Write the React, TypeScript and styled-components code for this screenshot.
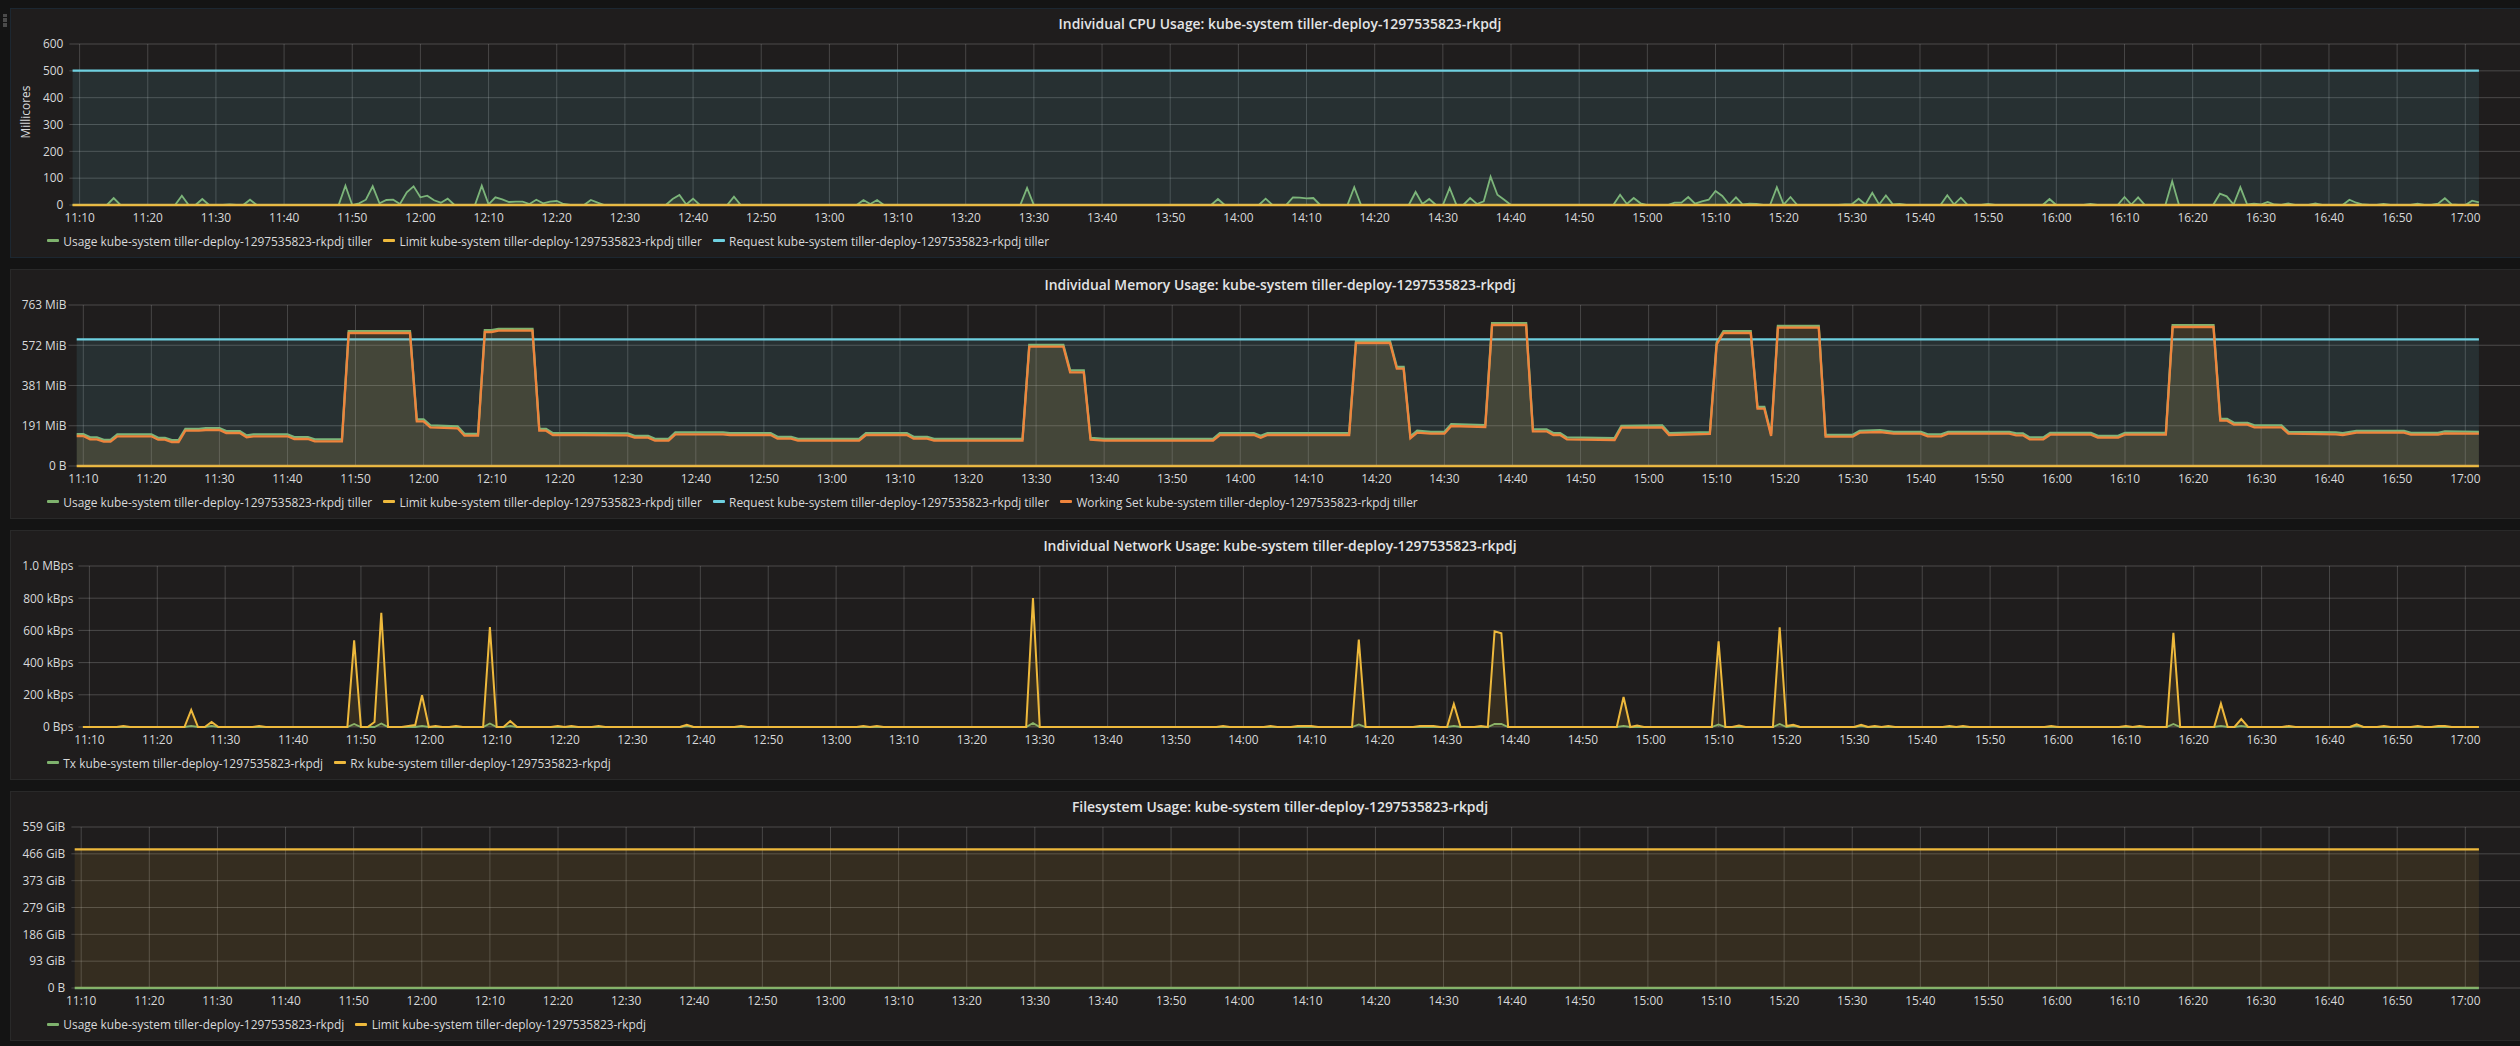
import React from 'react'
import styled, { createGlobalStyle } from 'styled-components'

const GREEN = '#7eb26d'
const YELLOW = '#eeb93c'
const CYAN = '#6ed0e0'
const ORANGE = '#ef843c'
const POD = 'kube-system tiller-deploy-1297535823-rkpdj'

const GlobalStyle = createGlobalStyle`
	html,
	body {
		margin: 0;
		height: 100%;
		overflow: hidden;
		background: #141414;
	}
`

const Dashboard = styled.div`
	display: flex;
	width: 2520px;
	height: 1046px;
	overflow: hidden;
	padding-top: 7.5px;
	box-sizing: border-box;
	font-family: 'Open Sans', sans-serif;
	color: #d8d9da;
`

const Rail = styled.div`
	flex: 0 0 10px;
	display: flex;
	flex-direction: column;
	align-items: center;
	gap: 1.6px;
	padding-top: 6px;
`

const RailDot = styled.span`
	width: 3.4px;
	height: 3.4px;
	background: #4a4a4a;
`

const Rows = styled.div`
	flex: 0 0 2540px;
	display: flex;
	flex-direction: column;
	gap: 11.2px;
`

const Panel = styled.section<{ $edge: string }>`
	display: flex;
	flex-direction: column;
	height: 250px;
	box-sizing: border-box;
	background: #1f1d1d;
	border: 1px solid ${(props) => props.$edge};
`

const Title = styled.h2`
	margin: 0;
	padding-top: 4px;
	height: 25px;
	box-sizing: border-box;
	line-height: 21px;
	text-align: center;
	font-size: 13.9px;
	font-weight: 600;
	color: #e3e4e5;
`

const Plot = styled.svg`
	display: block;
	flex: none;
`

const AxisText = styled.text`
	font-family: 'Open Sans', sans-serif;
	font-size: 11.9px;
	fill: #d8d9da;
`

const Legend = styled.ul`
	display: flex;
	align-items: center;
	gap: 11px;
	height: 22px;
	margin: 0;
	padding: 0 0 0 36px;
	list-style: none;
	font-size: 11.9px;
`

const LegendItem = styled.li`
	display: flex;
	align-items: center;
	gap: 4.3px;
	white-space: nowrap;
`

const Swatch = styled.span<{ $color: string }>`
	width: 12px;
	height: 3px;
	border-radius: 1px;
	background: ${(props) => props.$color};
`

type Point = [number, number]

interface Series {
	name: string
	color: string
	points: Point[]
	width?: number
}

interface ChartConfig {
	title: string
	edge: string
	yLabels: string[]
	yAxisEnd: number
	gridLeft: number
	seriesLeft: number
	tickZero: number
	yTitle?: string
	series: Series[]
}

const GRID_TOP = 10
const GRID_BOTTOM = 171
const LAST_TICK = 2454.3
const LAST_MINUTE = 352

// sparse samples -> one point per minute, anything not listed sits on zero
const perMinute = (samples: Record<number, number>): Point[] => {
	const out: Point[] = []
	for (let m = -1; m <= LAST_MINUTE; m++) out.push([m, samples[m] ?? 0])
	return out
}

const flat = (h: number): Point[] => [
	[-1, h],
	[LAST_MINUTE, h],
]

const cpuUsage = perMinute({
	5: 7, 15: 9.3, 18: 6, 22: 0.7, 25: 5.3, 39: 19.3, 41: 1.7, 42: 5.3, 43: 18.7, 44: 1.7, 45: 5, 46: 5.3, 47: 1,
	48: 12.7, 49: 18.7, 50: 7.7, 51: 9.3, 52: 4.7, 53: 2.3, 54: 6.3, 59: 19.3, 60: 0.7, 61: 7.7, 62: 5.7, 63: 3,
	64: 3.3, 65: 3.3, 66: 1, 67: 5.3, 68: 1.7, 69: 3.3, 70: 4, 71: 1, 75: 5, 76: 2.3, 87: 6, 88: 10, 89: 0.5, 90: 6.3,
	96: 8.3, 115: 5, 116: 1, 117: 5, 139: 17, 167: 6, 174: 6.3, 178: 7.7, 179: 7.3, 180: 6.7, 181: 7, 187: 17.7,
	196: 13, 197: 1, 198: 6, 201: 17, 204: 7, 205: 1, 206: 3.7, 207: 28.3, 208: 10.3, 209: 5.3, 226: 10.3, 227: 1,
	228: 7, 229: 1.7, 234: 2.3, 235: 2.3, 236: 8, 237: 1.3, 238: 3.7, 239: 5.3, 240: 14, 241: 9, 242: 0.5, 243: 7.7,
	244: 0.5, 245: 1.3, 246: 1, 249: 17.7, 250: 0.5, 251: 8, 259: 0.7, 260: 0.7, 261: 6.3, 262: 0.5, 263: 12.3,
	264: 0.5, 265: 9.5, 266: 0.6, 267: 1, 274: 9.7, 275: 0.5, 276: 7.3, 280: 1, 289: 6, 295: 1, 300: 8, 301: 0.5,
	302: 7.7, 307: 23.7, 314: 11.3, 315: 8.7, 316: 0.5, 317: 17.7, 318: 0.5, 319: 1.3, 320: 0.5, 321: 3, 322: 0.5,
	324: 1.5, 328: 1.5, 333: 5.3, 334: 2.3, 335: 0.5, 338: 1, 343: 1.3, 346: 1.3, 347: 6.7, 348: 0.5, 351: 4.3, 352: 2.7,
})

const workingSet: Point[] = [
	[-1, 30], [0, 30], [1, 26.7], [2, 26.7], [3, 24.3], [4, 24.3], [5, 29.7], [10, 29.7], [11, 26.3], [12, 26.3],
	[13, 24], [14, 24], [15, 35.3], [17, 35.3], [18, 36], [20, 36], [21, 33], [23, 33], [24, 28.7], [25, 29.7],
	[30, 29.7], [31, 27], [33, 27], [34, 24.7], [38, 24.7], [39, 133], [48, 133], [49, 44.7], [50, 44.7], [51, 38.7],
	[55, 37.7], [56, 30.3], [58, 30.3], [59, 134], [60, 134], [61, 135.3], [66, 135.3], [67, 35.3], [68, 35.3], [69, 31],
	[73, 31], [80, 30.7], [81, 28.3], [83, 28.3], [84, 25.3], [86, 25.3], [87, 31.7], [94, 31.7], [95, 31], [101, 31],
	[102, 27.3], [104, 27.3], [105, 25.3], [114, 25.3], [115, 31], [121, 31], [122, 27.3], [124, 27.3], [125, 25.3],
	[138, 25.3], [139, 119.3], [144, 119.3], [145, 93.7], [147, 93.7], [148, 26.3], [150, 25.3], [166, 25.3], [167, 31],
	[172, 31], [173, 28.3], [174, 31], [186, 31], [187, 123], [192, 123], [193, 97.3], [194, 97.3], [195, 27.7],
	[196, 33.3], [198, 32.3], [200, 32.3], [201, 40], [206, 39], [207, 141], [212, 141], [213, 34.7], [215, 34.7],
	[216, 31], [217, 31], [218, 26.7], [225, 26], [226, 38.3], [232, 38.6], [233, 31], [239, 32], [240, 121.7],
	[241, 133], [245, 133], [246, 57.3], [247, 57.3], [248, 30], [249, 138.3], [255, 138.3], [256, 29.3], [260, 29.3],
	[261, 33.3], [264, 34], [266, 32.3], [270, 32.3], [271, 29.7], [273, 29.7], [274, 32.3], [283, 32.3], [284, 30.7],
	[285, 30.7], [286, 26.7], [288, 26.7], [289, 31.3], [295, 31.3], [296, 28.3], [299, 28.3], [300, 31.3], [306, 31.3],
	[307, 139], [313, 139], [314, 45.3], [315, 45.3], [316, 41.3], [318, 41.3], [319, 38.7], [323, 38.7], [324, 32.3],
	[331, 31.7], [332, 31], [334, 33.3], [341, 33.3], [342, 31.3], [346, 31.3], [347, 32.7], [352, 32.3],
]

const memUsage: Point[] = workingSet.map(([m, h]) => [m, h + 1.9])

const netTx = perMinute({
	15: 1, 18: 1, 39: 3, 43: 3.5, 49: 1, 59: 3.5, 62: 1, 88: 1, 139: 4, 187: 2.5, 201: 1, 207: 3, 208: 3, 226: 1,
	240: 2.5, 249: 3, 251: 1, 261: 1, 307: 3, 314: 1, 317: 1, 334: 1,
})

const netRx = perMinute({
	5: 1, 15: 17, 18: 5, 25: 1, 39: 86.7, 42: 5, 43: 114.3, 47: 1, 48: 2, 49: 31.7, 51: 1, 54: 1, 59: 100, 62: 6, 69: 1,
	71: 1, 75: 1, 88: 2.3, 96: 1, 114: 1, 116: 1, 139: 129, 167: 1, 174: 1, 178: 1, 179: 1, 180: 1, 187: 87.3, 196: 1,
	197: 1, 198: 1, 201: 23, 205: 1, 207: 95.7, 208: 93.7, 226: 30, 228: 1.5, 240: 85.7, 243: 1.5, 249: 99.7, 250: 1,
	251: 2.3, 261: 2.3, 263: 1, 265: 1, 274: 1, 276: 1, 289: 1, 300: 1, 302: 1, 307: 94.3, 314: 23.3, 317: 8, 324: 1,
	334: 2.7, 338: 1, 343: 1, 346: 1, 347: 1,
})

const charts: ChartConfig[] = [
	{
		title: `Individual CPU Usage: ${POD}`,
		edge: '#1c2731',
		yLabels: ['600', '500', '400', '300', '200', '100', '0'],
		yAxisEnd: 52.3,
		gridLeft: 58.4,
		seriesLeft: 61.6,
		tickZero: 68.6,
		yTitle: 'Millicores',
		series: [
			{ name: `Usage ${POD} tiller`, color: GREEN, points: cpuUsage, width: 1.8 },
			{ name: `Limit ${POD} tiller`, color: YELLOW, points: flat(0) },
			{ name: `Request ${POD} tiller`, color: CYAN, points: flat(134.4) },
		],
	},
	{
		title: `Individual Memory Usage: ${POD}`,
		edge: '#292929',
		yLabels: ['763 MiB', '572 MiB', '381 MiB', '191 MiB', '0 B'],
		yAxisEnd: 55.5,
		gridLeft: 57.5,
		seriesLeft: 65.7,
		tickZero: 72.3,
		series: [
			{ name: `Usage ${POD} tiller`, color: GREEN, points: memUsage },
			{ name: `Limit ${POD} tiller`, color: YELLOW, points: flat(0) },
			{ name: `Request ${POD} tiller`, color: CYAN, points: flat(126.7) },
			{ name: `Working Set ${POD} tiller`, color: ORANGE, points: workingSet },
		],
	},
	{
		title: `Individual Network Usage: ${POD}`,
		edge: '#292929',
		yLabels: ['1.0 MBps', '800 kBps', '600 kBps', '400 kBps', '200 kBps', '0 Bps'],
		yAxisEnd: 62.5,
		gridLeft: 67.4,
		seriesLeft: 71.9,
		tickZero: 78.4,
		series: [
			{ name: `Tx ${POD}`, color: GREEN, points: netTx, width: 1.8 },
			{ name: `Rx ${POD}`, color: YELLOW, points: netRx, width: 2 },
		],
	},
	{
		title: `Filesystem Usage: ${POD}`,
		edge: '#292929',
		yLabels: ['559 GiB', '466 GiB', '373 GiB', '279 GiB', '186 GiB', '93 GiB', '0 B'],
		yAxisEnd: 54.3,
		gridLeft: 60.4,
		seriesLeft: 63.7,
		tickZero: 70.2,
		series: [
			{ name: `Usage ${POD}`, color: GREEN, points: flat(0) },
			{ name: `Limit ${POD}`, color: YELLOW, points: flat(138.7) },
		],
	},
]

const timeLabel = (minutes: number) => {
	const total = 11 * 60 + 10 + minutes
	return `${Math.floor(total / 60)}:${String(total % 60).padStart(2, '0')}`
}

const TICKS = Array.from({ length: 36 }, (_, i) => i * 10)

function Chart({ config }: { config: ChartConfig }) {
	const { yLabels, tickZero, seriesLeft, gridLeft, yAxisEnd, series, yTitle } = config
	const perMin = (LAST_TICK - tickZero) / 350
	const toX = (m: number) => tickZero + m * perMin
	const toY = (h: number) => GRID_BOTTOM - h
	const step = (GRID_BOTTOM - GRID_TOP) / (yLabels.length - 1)
	const right = toX(LAST_MINUTE)

	return (
		<Plot width={2538} height={196} viewBox="0 0 2538 196">
			{yLabels.map((label, i) => {
				const y = GRID_TOP + i * step
				return (
					<g key={label}>
						<line x1={gridLeft} x2={2538} y1={y} y2={y} stroke="rgba(200,200,200,0.26)" />
						<AxisText x={yAxisEnd} y={y + 4.3} textAnchor="end">
							{label}
						</AxisText>
					</g>
				)
			})}
			{TICKS.map((m) => (
				<g key={m}>
					<line
						x1={toX(m)}
						x2={toX(m)}
						y1={GRID_TOP}
						y2={GRID_BOTTOM}
						stroke="rgba(200,200,200,0.24)"
					/>
					<AxisText x={toX(m)} y={188} textAnchor="middle">
						{timeLabel(m)}
					</AxisText>
				</g>
			))}
			{yTitle && (
				<AxisText x={0} y={0} textAnchor="middle" transform="translate(19 78) rotate(-90)">
					{yTitle}
				</AxisText>
			)}
			{series.map((s) => {
				const coords = s.points.map(([m, h]) => `${m < 0 ? seriesLeft : toX(m)},${toY(h)}`).join(' ')
				return (
					<g key={s.name}>
						<polygon
							points={`${seriesLeft},${GRID_BOTTOM} ${coords} ${right},${GRID_BOTTOM}`}
							fill={s.color}
							fillOpacity={0.11}
						/>
						<polyline points={coords} fill="none" stroke={s.color} strokeWidth={s.width ?? 2.3} />
					</g>
				)
			})}
		</Plot>
	)
}

export default function App() {
	return (
		<>
			<GlobalStyle />
			<Dashboard>
				<Rail>
					<RailDot />
					<RailDot />
					<RailDot />
				</Rail>
				<Rows>
					{charts.map((config) => (
						<Panel key={config.title} $edge={config.edge}>
							<Title>{config.title}</Title>
							<Chart config={config} />
							<Legend>
								{config.series.map((s) => (
									<LegendItem key={s.name}>
										<Swatch $color={s.color} />
										{s.name}
									</LegendItem>
								))}
							</Legend>
						</Panel>
					))}
				</Rows>
			</Dashboard>
		</>
	)
}
